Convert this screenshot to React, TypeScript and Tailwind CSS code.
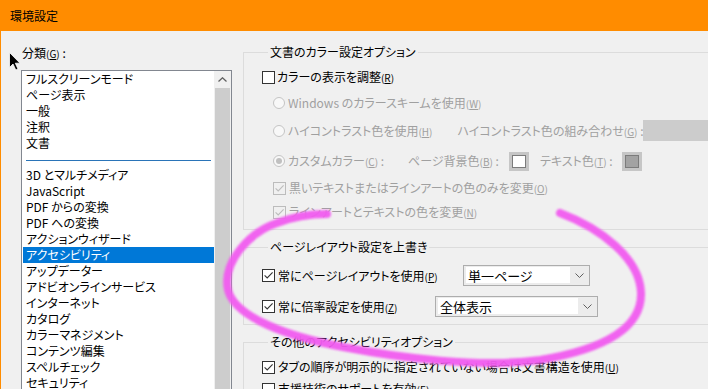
import React from 'react';

const ITEMS_TOP = ['フルスクリーンモード', 'ページ表示', '一般', '注釈', '文書'];
const ITEMS = [
    '3D とマルチメディア',
    'JavaScript',
    'PDF からの変換',
    'PDF への変換',
    'アクションウィザード',
    'アクセシビリティ',
    'アップデーター',
    'アドビオンラインサービス',
    'インターネット',
    'カタログ',
    'カラーマネジメント',
    'コンテンツ編集',
    'スペルチェック',
    'セキュリティ',
];

// mnemonic like (R) with underlined key
function Mn({ k }: { k: string }) {
    return (
        <span className="text-[10px]">
            (<span className="underline underline-offset-[1px]">{k}</span>)
        </span>
    );
}

function Check({ checked = false, disabled = false }: { checked?: boolean; disabled?: boolean }) {
    return (
        <span
            className={`w-[13px] h-[13px] border flex items-center justify-center shrink-0 ${disabled ? 'border-[#bcbcbc] bg-[#f0f0f0]' : 'border-[#333333] bg-white'}`}
        >
            {checked && (
                <svg width="11" height="11" viewBox="0 0 11 11">
                    <path d="M1.6 5.4 L4.2 8 L9.6 2.4" fill="none" stroke={disabled ? '#bcbcbc' : '#333333'} strokeWidth="1.1" />
                </svg>
            )}
        </span>
    );
}

function Radio({ checked = false }: { checked?: boolean }) {
    return (
        <span className="w-[12px] h-[12px] rounded-full border border-[#c4c4c4] bg-[#f8f8f8] flex items-center justify-center shrink-0">
            {checked && <span className="w-[6px] h-[6px] rounded-full bg-[#c0c0c0]"></span>}
        </span>
    );
}

function Combo({ value, className }: { value: string; className: string }) {
    return (
        <div className={`h-[21px] border border-[#adadad] bg-[#ececec] flex items-stretch pl-[2px] pt-[1px] pb-[2px] ${className}`}>
            <div className="flex-1 bg-white text-[13px] leading-[18px] pl-[2px] text-black">{value}</div>
            <div className="w-[19px] flex items-center justify-center">
                <svg width="9" height="5" viewBox="0 0 9 5">
                    <path d="M0.5 0.5 L4.5 4.5 L8.5 0.5" fill="none" stroke="#606060" strokeWidth="1" />
                </svg>
            </div>
        </div>
    );
}

function Swatch({ fill }: { fill: string }) {
    return (
        <span className="w-[20px] h-[19px] bg-[#c6c6c6] p-[3px] flex shrink-0">
            <span className="flex-1 border border-[#7c7c7c]" style={{ background: fill }}></span>
        </span>
    );
}

function GroupTitle({ children }: { children: React.ReactNode }) {
    return <div className="-mt-[9px] ml-[6px] px-[2px] bg-[#f0f0f0] w-fit leading-[16px] text-black">{children}</div>;
}

export default function App() {
    return (
        <div className="relative w-[708px] h-[389px] overflow-hidden bg-[#f0f0f0] text-[12px] font-['Noto_Sans_CJK_JP',sans-serif] [font-feature-settings:'palt']">
            {/* title bar */}
            <div className="h-[31px] bg-[#ff8c00] flex items-center pl-[10px] text-black text-[12px]">環境設定</div>

            <div className="flex h-[358px] border-l border-[#ff8c00]">
                {/* category list */}
                <div className="w-[242px] shrink-0 pt-[14px] pl-[20px]">
                    <div className="leading-[16px] pl-[1px] text-black">
                        分類<Mn k="G" /> :
                    </div>
                    <div className="mt-[8px] w-[211px] h-[400px] border border-[#828790] bg-white flex">
                        <div className="flex-1 pl-[1px]">
                            {ITEMS_TOP.map((t) => (
                                <div key={t} className="h-[16px] leading-[16px] pl-[3px] text-black whitespace-nowrap">{t}</div>
                            ))}
                            <div className="h-[16px] pt-[9px] pl-[3px] pr-[3px]">
                                <div className="h-[1px] bg-[#2a74b8]"></div>
                            </div>
                            {ITEMS.map((t) => (
                                <div
                                    key={t}
                                    className={`h-[16px] leading-[16px] pl-[3px] whitespace-nowrap ${t === 'アクセシビリティ' ? 'bg-[#0078d7] text-white' : 'text-black'}`}
                                >
                                    {t}
                                </div>
                            ))}
                        </div>
                        <div className="w-[17px] bg-[#f0f0f0] flex flex-col">
                            <div className="h-[17px] flex items-center justify-center">
                                <svg width="9" height="5" viewBox="0 0 9 5">
                                    <path d="M0.5 4.5 L4.5 0.8 L8.5 4.5" fill="none" stroke="#606060" strokeWidth="1.3" />
                                </svg>
                            </div>
                            <div className="flex-1 mx-[1px] bg-[#cdcdcd]"></div>
                        </div>
                    </div>
                </div>

                {/* options */}
                <div className="w-[480px] shrink-0 pt-[21px]">
                    {/* color options */}
                    <div className="h-[178px] border border-[#dcdcdc] pl-[18px]">
                        <GroupTitle>文書のカラー設定オプション</GroupTitle>
                        <div className="mt-[7px] h-[20px] flex items-center gap-[2px] text-black">
                            <Check />
                            <span>カラーの表示を調整<Mn k="R" /></span>
                        </div>
                        <div className="mt-[6px] ml-[11px] h-[20px] flex items-center gap-[3px] text-[#a0a0a0]">
                            <Radio />
                            <span>Windows のカラースキームを使用<Mn k="W" /></span>
                        </div>
                        <div className="mt-[7px] ml-[11px] h-[21px] flex items-center text-[#a0a0a0]">
                            <div className="w-[188px] flex items-center gap-[3px]">
                                <Radio />
                                <span>ハイコントラスト色を使用<Mn k="H" /></span>
                            </div>
                            <div className="w-[189px] whitespace-nowrap">ハイコントラスト色の組み合わせ<Mn k="G" /> :</div>
                            <div className="w-[80px] h-[21px] bg-[#cccccc]"></div>
                        </div>
                        <div className="mt-[10px] ml-[11px] h-[20px] flex items-center text-[#a0a0a0]">
                            <div className="w-[135px] flex items-center gap-[3px]">
                                <Radio checked />
                                <span>カスタムカラー<Mn k="C" /> :</span>
                            </div>
                            <div className="w-[101px] whitespace-nowrap">ページ背景色<Mn k="B" /> :</div>
                            <Swatch fill="#ffffff" />
                            <div className="ml-[11px] w-[82px] whitespace-nowrap">テキスト色<Mn k="T" /> :</div>
                            <Swatch fill="#a3a3a3" />
                        </div>
                        <div className="mt-[7px] ml-[11px] h-[20px] flex items-center gap-[3px] text-[#a0a0a0]">
                            <Check checked disabled />
                            <span>黒いテキストまたはラインアートの色のみを変更<Mn k="O" /></span>
                        </div>
                        <div className="mt-[4px] ml-[11px] h-[20px] flex items-center gap-[3px] text-[#a0a0a0]">
                            <Check checked disabled />
                            <span>ラインアートとテキストの色を変更<Mn k="N" /></span>
                        </div>
                    </div>

                    {/* page layout */}
                    <div className="mt-[17px] h-[78px] border border-[#dcdcdc] pl-[18px]">
                        <GroupTitle>ページレイアウト設定を上書き</GroupTitle>
                        <div className="mt-[10px] h-[21px] flex items-center text-black">
                            <div className="w-[201px] flex items-center gap-[3px]">
                                <Check checked />
                                <span>常にページレイアウトを使用<Mn k="P" /></span>
                            </div>
                            <Combo value="単一ページ" className="w-[127px]" />
                        </div>
                        <div className="mt-[10px] h-[21px] flex items-center text-black">
                            <div className="w-[173px] flex items-center gap-[3px]">
                                <Check checked />
                                <span>常に倍率設定を使用<Mn k="Z" /></span>
                            </div>
                            <Combo value="全体表示" className="w-[163px]" />
                        </div>
                    </div>

                    {/* other accessibility options */}
                    <div className="mt-[17px] h-[120px] border border-[#dcdcdc] pl-[18px]">
                        <GroupTitle>その他のアクセシビリティオプション</GroupTitle>
                        <div className="mt-[7px] h-[20px] flex items-center gap-[3px] text-black">
                            <Check checked />
                            <span>タブの順序が明示的に指定されていない場合は文書構造を使用<Mn k="U" /></span>
                        </div>
                        <div className="mt-[2px] h-[20px] flex items-center gap-[3px] text-black">
                            <Check />
                            <span>支援技術のサポートを有効<Mn k="E" /></span>
                        </div>
                    </div>
                </div>
            </div>

            {/* hand-drawn highlight */}
            <svg className="absolute left-0 top-0 pointer-events-none" width="708" height="389" viewBox="0 0 708 389">
                <defs>
                    <filter id="soft" x="-10%" y="-10%" width="120%" height="120%">
                        <feGaussianBlur stdDeviation="0.9" />
                    </filter>
                </defs>
                <path
                    d="M560 213 C600 228 640 258 641 293 C642 330 600 350 540 360 C480 368 400 358 343 347 C290 337 235 318 228 290 C222 262 250 232 277 223 C295 216 310 214 327 214"
                    fill="none"
                    stroke="#f25cf0"
                    strokeWidth="8"
                    strokeLinecap="round"
                    filter="url(#soft)"
                    opacity="0.95"
                />
            </svg>

            {/* mouse pointer */}
            <svg className="absolute left-[9px] top-[52px] pointer-events-none" width="13" height="20" viewBox="0 0 13 20">
                <path d="M0.5 0.5 L0.5 15.5 L4 12 L6.8 18 L9 17 L6.3 11.2 L11 11.2 Z" fill="#000000" stroke="#ffffff" strokeWidth="0.8" />
            </svg>
        </div>
    );
}
